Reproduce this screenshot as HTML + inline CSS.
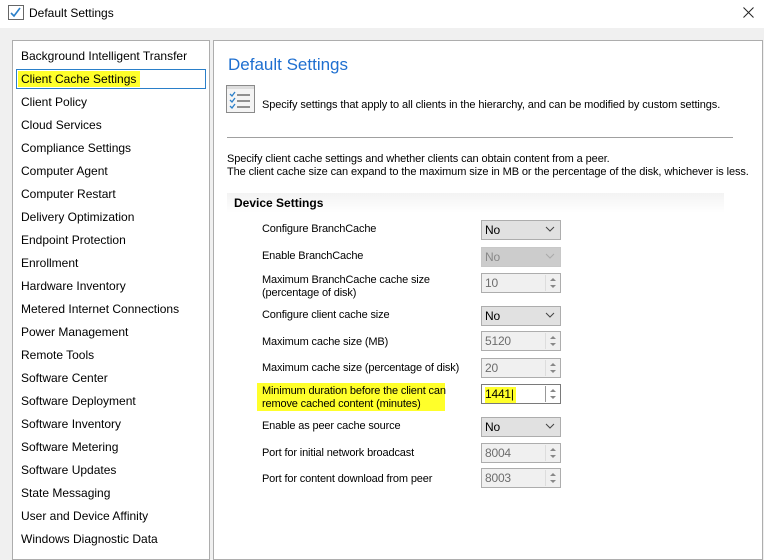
<!DOCTYPE html>
<html><head><meta charset="utf-8"><style>
*{margin:0;padding:0;box-sizing:border-box}
body{width:764px;height:550px;background:#f0f0f0;font-family:"Liberation Sans",sans-serif;font-size:12px;color:#000;position:relative;overflow:hidden}
.a{position:absolute;white-space:nowrap}
#title{left:0;top:0;width:764px;height:28px;background:#fff}
#left{left:12px;top:40px;width:198px;height:520px;background:#fff;border:1px solid #adadad}
#right{left:213px;top:40px;width:550px;height:520px;background:#fff;border:1px solid #adadad}
.li{left:21px;font-size:12px}
.r{font-size:11px;letter-spacing:-0.1px}
.lab{left:262px;font-size:11px;line-height:13px;letter-spacing:-0.15px}
.ctl{left:481px;width:80px;height:20px;border:1px solid #adadad;font-size:12px;padding:2px 0 0 3px;letter-spacing:-0.2px}
.cb{background:#e1e1e1;color:#000}
.cbd{background:#ccc;border-color:#c8c8c8;color:#888}
.sp{background:#f0f0f0;color:#6d6d6d}
.arr{position:absolute;right:5px;top:3px;width:10px;height:10px}
.spb{position:absolute;right:1px;top:1px;width:14px;height:16px;border-left:1px solid #ddd}
.spb:before{content:"";position:absolute;left:4px;top:3px;border:3px solid transparent;border-bottom:3px solid #888;border-top:0}
.spb:after{content:"";position:absolute;left:4px;top:10px;border:3px solid transparent;border-top:3px solid #888;border-bottom:0}
</style></head><body>
<div class="a" id="title"></div>
<svg class="a" style="left:8px;top:5px" width="16" height="15" viewBox="0 0 16 15"><rect x="0.5" y="0.5" width="15" height="14" fill="#fff" stroke="#666"/><path d="M3 8 L6 11 L12 3" stroke="#2a7fc9" stroke-width="1.6" fill="none"/></svg>
<div class="a" style="left:29px;top:6px;font-size:12px">Default Settings</div>
<svg class="a" style="left:743px;top:7px" width="11" height="11" viewBox="0 0 11 11"><path d="M0.5 0.5L10.5 10.5M10.5 0.5L0.5 10.5" stroke="#222" stroke-width="1"/></svg>
<div class="a" id="left"></div>
<div class="a" id="right"></div>
<div class="a" style="left:16px;top:69px;width:190px;height:20px;border:1px solid #2a7fc9"></div>
<div class="a" style="left:18px;top:71px;width:122px;height:16px;background:#ffff2a"></div>
<div class="a li" style="top:49px">Background Intelligent Transfer</div>
<div class="a li" style="top:72px">Client Cache Settings</div>
<div class="a li" style="top:95px">Client Policy</div>
<div class="a li" style="top:118px">Cloud Services</div>
<div class="a li" style="top:141px">Compliance Settings</div>
<div class="a li" style="top:164px">Computer Agent</div>
<div class="a li" style="top:187px">Computer Restart</div>
<div class="a li" style="top:210px">Delivery Optimization</div>
<div class="a li" style="top:233px">Endpoint Protection</div>
<div class="a li" style="top:256px">Enrollment</div>
<div class="a li" style="top:279px">Hardware Inventory</div>
<div class="a li" style="top:302px">Metered Internet Connections</div>
<div class="a li" style="top:325px">Power Management</div>
<div class="a li" style="top:348px">Remote Tools</div>
<div class="a li" style="top:371px">Software Center</div>
<div class="a li" style="top:394px">Software Deployment</div>
<div class="a li" style="top:417px">Software Inventory</div>
<div class="a li" style="top:440px">Software Metering</div>
<div class="a li" style="top:463px">Software Updates</div>
<div class="a li" style="top:486px">State Messaging</div>
<div class="a li" style="top:509px">User and Device Affinity</div>
<div class="a li" style="top:532px">Windows Diagnostic Data</div>

<div class="a" style="left:228px;top:55px;font-size:17px;color:#1e6fd0">Default Settings</div>
<svg class="a" style="left:226px;top:85px" width="30" height="29" viewBox="0 0 30 29"><rect x="0.5" y="0.5" width="28" height="27" fill="#f4f4f4" stroke="#8a8a8a"/><rect x="1" y="1" width="27" height="3" fill="#ddd"/><path d="M4 9l2 2 3-4M4 15l2 2 3-4M4 21l2 2 3-4" stroke="#2a7fc9" stroke-width="1.3" fill="none"/><path d="M11 10h13M11 16h13M11 22h13" stroke="#555" stroke-width="1.2"/></svg>
<div class="a r" style="left:262px;top:99px">Specify settings that apply to all clients in the hierarchy, and can be modified by custom settings.</div>
<div class="a" style="left:227px;top:137px;width:506px;height:1px;background:#a0a0a0"></div>
<div class="a r" style="left:227px;top:153px;line-height:13px">Specify client cache settings and whether clients can obtain content from a peer.<br>The client cache size can expand to the maximum size in MB or the percentage of the disk, whichever is less.</div>
<div class="a" style="left:227px;top:193px;width:497px;height:20px;background:linear-gradient(#f3f3f3,#fafafa 60%,#fff)"></div>
<div class="a" style="left:234px;top:196px;font-weight:bold;font-size:12px">Device Settings</div>

<div class="a" style="left:257px;top:383px;width:188px;height:28px;background:#ffff2a"></div>
<div class="a lab" style="top:223px">Configure BranchCache</div>
<div class="a lab" style="top:250px">Enable BranchCache</div>
<div class="a lab" style="top:274px">Maximum BranchCache cache size<br>(percentage of disk)</div>
<div class="a lab" style="top:309px">Configure client cache size</div>
<div class="a lab" style="top:336px">Maximum cache size (MB)</div>
<div class="a lab" style="top:362px">Maximum cache size (percentage of disk)</div>
<div class="a lab" style="top:385px">Minimum duration before the client can<br>remove cached content (minutes)</div>
<div class="a lab" style="top:420px">Enable as peer cache source</div>
<div class="a lab" style="top:447px">Port for initial network broadcast</div>
<div class="a lab" style="top:473px">Port for content download from peer</div>

<div class="a ctl cb" style="top:220px">No<svg class="arr" viewBox="0 0 10 10"><path d="M1 3l4 4 4-4" stroke="#444" fill="none"/></svg></div>
<div class="a ctl cbd" style="top:247px">No<svg class="arr" viewBox="0 0 10 10"><path d="M1 3l4 4 4-4" stroke="#aaa" fill="none"/></svg></div>
<div class="a ctl sp" style="top:273px">10<span class="spb"></span></div>
<div class="a ctl cb" style="top:306px">No<svg class="arr" viewBox="0 0 10 10"><path d="M1 3l4 4 4-4" stroke="#444" fill="none"/></svg></div>
<div class="a ctl sp" style="top:331px">5120<span class="spb"></span></div>
<div class="a ctl sp" style="top:358px">20<span class="spb"></span></div>
<div class="a ctl" style="top:384px;background:#fff;border-color:#7a7a7a"><span style="background:#ffff2a;padding:0 2px 2px 0">1441|</span><span class="spb" style="border-left-color:#999"></span></div>
<div class="a ctl cb" style="top:417px">No<svg class="arr" viewBox="0 0 10 10"><path d="M1 3l4 4 4-4" stroke="#444" fill="none"/></svg></div>
<div class="a ctl sp" style="top:443px">8004<span class="spb"></span></div>
<div class="a ctl sp" style="top:468px">8003<span class="spb"></span></div>
</body></html>
